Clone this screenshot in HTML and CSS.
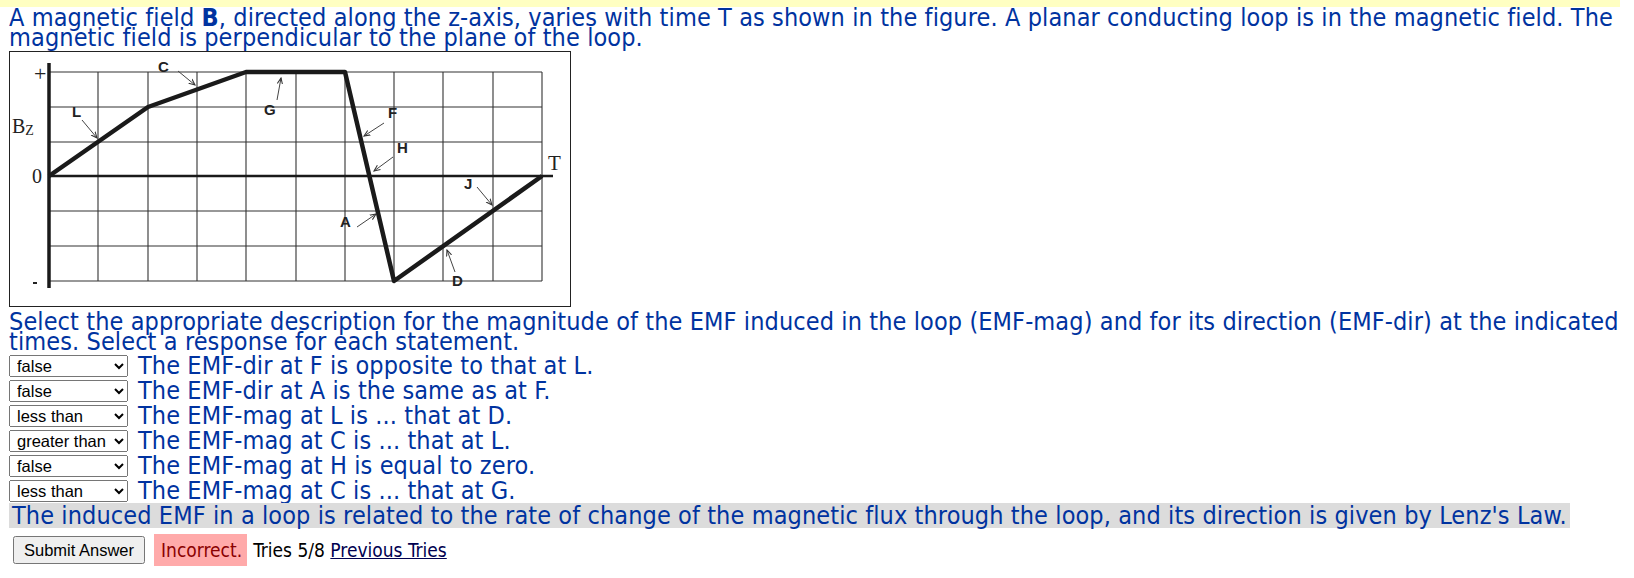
FILE: index.html
```html
<!DOCTYPE html>
<html lang="en">
<head>
    <meta charset="UTF-8">
    <title>Magnetic Field Problem</title>
    <link rel="stylesheet" href="styles.css">
</head>
<body>
    <div class="topbar"></div>

    <div class="problem">
        <p class="text">A magnetic field <b>B</b>, directed along the z-axis, varies with time T as shown in the figure. A planar conducting loop is in the magnetic field. The magnetic field is perpendicular to the plane of the loop.</p>

        <div class="figure">
            <svg width="560" height="254" viewBox="0 0 560 254">
                <defs>
                    <marker id="head" viewBox="0 0 8 8" refX="7" refY="4" markerWidth="7" markerHeight="7" orient="auto">
                        <path d="M0,1 L7,4 L0,7" fill="none" stroke="#333" stroke-width="1.2"/>
                    </marker>
                </defs>

                <!-- grid -->
                <path class="grid" d="M39,20 H532 M39,55 H532 M39,90 H532 M39,159 H532 M39,194 H532 M39,229 H532
                    M88,20 V229 M138,20 V229 M187,20 V229 M236,20 V229 M286,20 V229
                    M335,20 V229 M384,20 V229 M433,20 V229 M483,20 V229 M532,20 V229"/>

                <!-- axes -->
                <line class="axis" x1="39" y1="11" x2="39" y2="236"/>
                <line class="zero" x1="39" y1="124" x2="543" y2="124"/>

                <!-- B(t) -->
                <polyline class="curve" points="39,124 138,55 236,20 335,20 384,229 532,124"/>

                <!-- axis labels -->
                <text class="serif plus" x="24" y="29">+</text>
                <text class="serif" x="2" y="81">B<tspan class="sub" dy="2">Z</tspan></text>
                <text class="serif" x="22" y="131">0</text>
                <rect x="23" y="230" width="4" height="2" fill="#222"/>
                <text class="serif tee" x="538" y="118">T</text>

                <!-- point labels -->
                <text class="tag" x="62" y="65">L</text>
                <text class="tag" x="148" y="20">C</text>
                <text class="tag" x="254" y="63">G</text>
                <text class="tag" x="378" y="66">F</text>
                <text class="tag" x="387" y="101">H</text>
                <text class="tag" x="330" y="175">A</text>
                <text class="tag" x="454" y="137">J</text>
                <text class="tag" x="442" y="234">D</text>

                <!-- pointers -->
                <line class="arrow" x1="72" y1="68" x2="87" y2="86"/>
                <line class="arrow" x1="168" y1="19" x2="185" y2="33"/>
                <line class="arrow" x1="267" y1="48" x2="271" y2="26"/>
                <line class="arrow" x1="374" y1="71" x2="354" y2="84"/>
                <line class="arrow" x1="383" y1="105" x2="364" y2="119"/>
                <line class="arrow" x1="347" y1="175" x2="366" y2="162"/>
                <line class="arrow" x1="467" y1="135" x2="482" y2="153"/>
                <line class="arrow" x1="445" y1="220" x2="437" y2="198"/>
            </svg>
        </div>

        <p class="text">Select the appropriate description for the magnitude of the EMF induced in the loop (EMF-mag) and for its direction (EMF-dir) at the indicated times. Select a response for each statement.</p>

        <div class="statements">
            <div class="row">
                <select><option selected>false</option><option>true</option></select>
                <span>The EMF-dir at F is opposite to that at L.</span>
            </div>
            <div class="row">
                <select><option selected>false</option><option>true</option></select>
                <span>The EMF-dir at A is the same as at F.</span>
            </div>
            <div class="row">
                <select><option selected>less than</option><option>equal to</option><option>greater than</option></select>
                <span>The EMF-mag at L is ... that at D.</span>
            </div>
            <div class="row">
                <select><option>less than</option><option>equal to</option><option selected>greater than</option></select>
                <span>The EMF-mag at C is ... that at L.</span>
            </div>
            <div class="row">
                <select><option selected>false</option><option>true</option></select>
                <span>The EMF-mag at H is equal to zero.</span>
            </div>
            <div class="row">
                <select><option selected>less than</option><option>equal to</option><option>greater than</option></select>
                <span>The EMF-mag at C is ... that at G.</span>
            </div>
        </div>

        <div class="hint">The induced EMF in a loop is related to the rate of change of the magnetic flux through the loop, and its direction is given by Lenz's Law.</div>

        <div class="submit-row">
            <button>Submit Answer</button>
            <span class="status">Incorrect.</span>
            <span class="tries">Tries 5/8 <a href="#">Previous Tries</a></span>
        </div>
    </div>
</body>
</html>
```

FILE: styles.css
```css
body {
    margin: 0;
    background: #fff;
    font-family: "DejaVu Sans Condensed", "DejaVu Sans", sans-serif;
}

.topbar {
    width: 1620px;
    height: 7px;
    background: #ffffc2;
}

.problem {
    padding: 1px 0 0 9px;
    color: #0033a0;
    font-size: 25px;
    line-height: 20px;
    letter-spacing: 0.1px;
}

.text {
    margin: 0;
}

/* figure */
.figure {
    width: 560px;
    height: 254px;
    border: 1px solid #222;
    margin: 3px 0 5px;
    letter-spacing: 0;
}

.figure svg {
    display: block;
}

.grid {
    fill: none;
    stroke: #333;
    stroke-width: 1.1;
}

.axis {
    stroke: #1a1a1a;
    stroke-width: 3.5;
}

.zero {
    stroke: #1a1a1a;
    stroke-width: 2.5;
}

.curve {
    fill: none;
    stroke: #1a1a1a;
    stroke-width: 4.5;
    stroke-linejoin: round;
}

.serif {
    font-family: "Liberation Serif", serif;
    font-size: 20px;
    fill: #222;
}

.serif .sub {
    font-size: 14px;
}

.plus {
    font-size: 22px;
}

.tee {
    font-size: 21px;
}

.tag {
    font-family: "Liberation Sans", sans-serif;
    font-size: 15px;
    font-weight: bold;
    fill: #222;
}

.arrow {
    stroke: #444;
    stroke-width: 1;
    marker-end: url(#head);
}

/* statements */
.statements {
    margin-top: 1px;
}

.row {
    display: flex;
    align-items: center;
    gap: 10px;
    height: 25px;
}

select {
    width: 119px;
    height: 22px;
    padding-left: 3px;
    font-family: "Liberation Sans", Arial, sans-serif;
    font-size: 16.5px;
    letter-spacing: 0;
    color: #000;
}

.hint {
    display: inline-block;
    padding: 0 3px;
    background: #dcdcdc;
    line-height: 25px;
}

.submit-row {
    display: flex;
    align-items: center;
    margin-top: 6px;
    font-size: 19px;
    letter-spacing: 0;
}

button {
    margin-left: 4px;
    height: 28px;
    padding: 0 9px;
    font-family: "Liberation Sans", Arial, sans-serif;
    font-size: 16.5px;
    color: #000;
}

.status {
    margin-left: 9px;
    padding: 0 5px 0 7px;
    line-height: 32px;
    background: #ffaaaa;
    color: #8a0000;
}

.tries {
    margin-left: 6px;
    color: #000;
}

.tries a {
    color: #000050;
}
```
